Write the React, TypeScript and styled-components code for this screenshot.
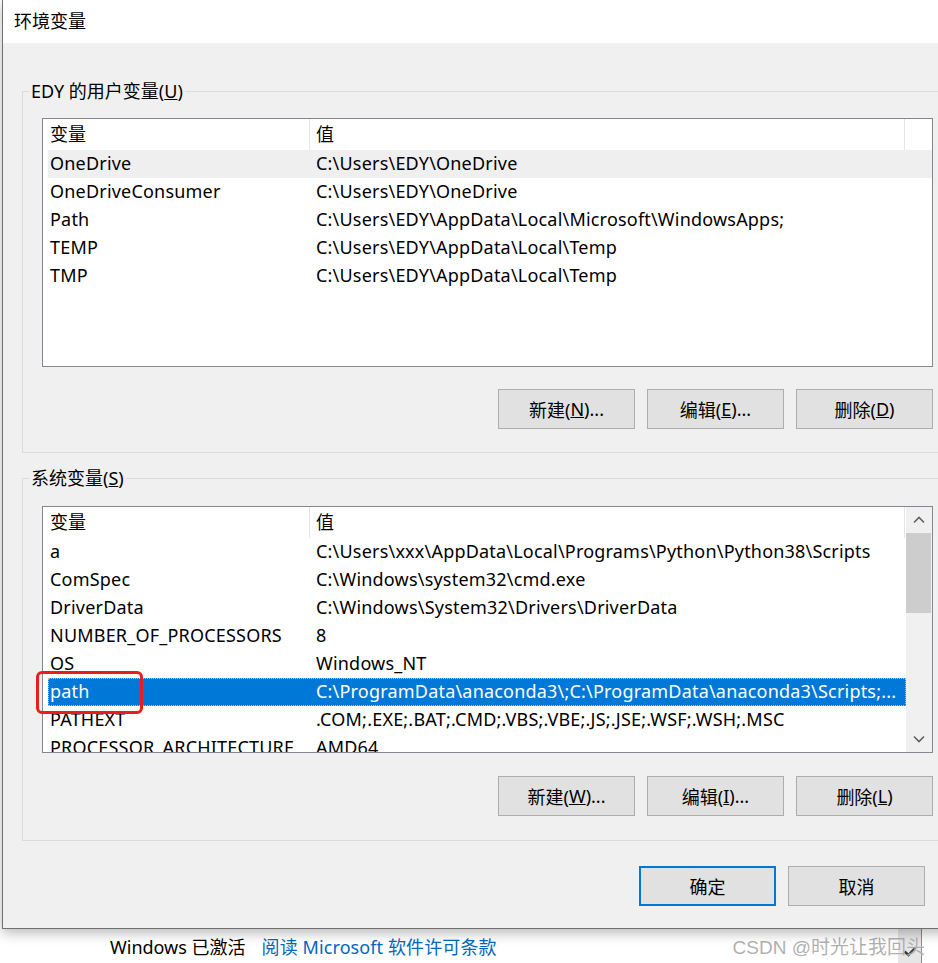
import React from 'react';
import styled, { createGlobalStyle } from 'styled-components';

const FONT = `"Noto Sans", "Noto Sans CJK SC", sans-serif`;

const Global = createGlobalStyle`
  html, body { margin: 0; padding: 0; background: #ffffff; }
  body { font-family: ${FONT}; color: #000; }
  * { box-sizing: border-box; }
`;

const Page = styled.div`
  position: relative;
  width: 938px;
  height: 963px;
  overflow: hidden;
  background: #ffffff;
`;

const Dialog = styled.div`
  margin-left: 2px;
  width: 980px;
  height: 929px;
  border-left: 1px solid #707070;
  border-bottom: 1px solid #707070;
  box-shadow: 0 4px 12px rgba(0, 0, 0, 0.28);
  background: #f0f0f0;
  display: flex;
  flex-direction: column;
  position: relative;
  z-index: 1;
`;

const TitleBar = styled.div`
  height: 43px;
  flex: none;
  background: #ffffff;
  display: flex;
  align-items: center;
  padding: 0 0 3px 11px;
  font-size: 18px;
`;

const Body = styled.div`
  display: flex;
  flex-direction: column;
  padding-left: 19px;
`;

const Group = styled.fieldset<{ $mt: number }>`
  margin: ${(p) => p.$mt}px 0 0 0;
  width: 931px;
  min-inline-size: 0;
  border: 1px solid #dcdcdc;
  padding: 0 19px;
  display: flex;
  flex-direction: column;
`;

const Legend = styled.legend`
  font-size: 18px;
  line-height: 24px;
  padding: 0 2px;
  margin-left: -13px;
`;

const ListBox = styled.div<{ $mt: number; $h: number }>`
  margin-top: ${(p) => p.$mt}px;
  height: ${(p) => p.$h}px;
  border: 1px solid #828790;
  background: #ffffff;
  display: flex;
  overflow: hidden;
`;

const Table = styled.div`
  flex: 1;
  min-width: 0;
  overflow: hidden;
  font-size: 18px;
`;

const HeaderRow = styled.div`
  display: grid;
  grid-template-columns: 267px 595px;
  height: 31px;
`;

const HeaderCell = styled.div<{ $pl: number }>`
  border-right: 1px solid #e5e5e5;
  padding-left: ${(p) => p.$pl}px;
  line-height: 30px;
  white-space: nowrap;
  overflow: hidden;
`;

const Row = styled.div<{ $state?: 'hover' | 'selected' }>`
  display: grid;
  grid-template-columns: 261px 596px;
  height: 28px;
  margin-left: 5px;
  line-height: 27px;
  white-space: nowrap;
  letter-spacing: 0.2px;
  background: ${(p) =>
    p.$state === 'selected' ? '#0078d7' : p.$state === 'hover' ? '#efefef' : 'transparent'};
  color: ${(p) => (p.$state === 'selected' ? '#ffffff' : '#000000')};
  outline: ${(p) => (p.$state === 'selected' ? '1px dotted #f3b26b' : 'none')};
  outline-offset: -1px;
`;

const Cell = styled.div<{ $pl: number }>`
  padding-left: ${(p) => p.$pl}px;
  overflow: hidden;
`;

const Scrollbar = styled.div`
  width: 26px;
  flex: none;
  background: #f0f0f0;
  display: flex;
  flex-direction: column;
`;

const ArrowBtn = styled.div`
  height: 26px;
  flex: none;
  display: flex;
  align-items: center;
  justify-content: center;
`;

const Track = styled.div`
  flex: 1;
`;

const Thumb = styled.div`
  height: 80px;
  margin-right: 1px;
  background: #cdcdcd;
`;

const ButtonRow = styled.div<{ $mt: number; $mb: number }>`
  display: flex;
  justify-content: flex-end;
  gap: 12px;
  margin: ${(p) => p.$mt}px 0 ${(p) => p.$mb}px 0;
`;

const Button = styled.button<{ $primary?: boolean }>`
  width: 137px;
  height: 40px;
  background: #e1e1e1;
  border: ${(p) => (p.$primary ? '2px solid #0078d7' : '1px solid #adadad')};
  font-family: ${FONT};
  font-size: 18px;
  color: #000;
  padding: 0;
  display: flex;
  align-items: center;
  justify-content: center;
`;

const FooterButtons = styled.div`
  display: flex;
  justify-content: flex-end;
  gap: 12px;
  margin-top: 25px;
  width: 903px;
`;

const Desk = styled.div`
  height: 34px;
  display: flex;
  align-items: center;
  padding-left: 110px;
  font-size: 18px;
  position: relative;
`;

const DeskText = styled.span`
  color: #000;
  white-space: nowrap;
`;

const DeskLink = styled.span`
  color: #0067c0;
  margin-left: 16px;
  white-space: nowrap;
  letter-spacing: 0.1px;
`;

const TrayTab = styled.div`
  margin-left: auto;
  margin-right: 16px;
  align-self: stretch;
  width: 24px;
  background: #e6e6e6;
  border-right: 1px solid #8a8a8a;
  display: flex;
  align-items: flex-end;
  justify-content: center;
  padding-bottom: 6px;
`;

const Watermark = styled.div`
  position: absolute;
  right: 13px;
  top: 3px;
  font-family: "Liberation Sans", "Noto Sans CJK SC", sans-serif;
  font-size: 19px;
  color: rgba(150, 150, 150, 0.75);
  text-shadow: 0 0 1px rgba(255, 255, 255, 0.8);
  white-space: nowrap;
`;

const Annotation = styled.div`
  position: absolute;
  left: 36px;
  top: 671px;
  width: 107px;
  height: 43px;
  border: 3px solid #ec1c1c;
  border-radius: 6px;
  z-index: 2;
`;

type Item = { name: string; value: string; state?: 'hover' | 'selected' };

const userVars: Item[] = [
  { name: 'OneDrive', value: 'C:\\Users\\EDY\\OneDrive', state: 'hover' },
  { name: 'OneDriveConsumer', value: 'C:\\Users\\EDY\\OneDrive' },
  { name: 'Path', value: 'C:\\Users\\EDY\\AppData\\Local\\Microsoft\\WindowsApps;' },
  { name: 'TEMP', value: 'C:\\Users\\EDY\\AppData\\Local\\Temp' },
  { name: 'TMP', value: 'C:\\Users\\EDY\\AppData\\Local\\Temp' },
];

const sysVars: Item[] = [
  { name: 'a', value: 'C:\\Users\\xxx\\AppData\\Local\\Programs\\Python\\Python38\\Scripts' },
  { name: 'ComSpec', value: 'C:\\Windows\\system32\\cmd.exe' },
  { name: 'DriverData', value: 'C:\\Windows\\System32\\Drivers\\DriverData' },
  { name: 'NUMBER_OF_PROCESSORS', value: '8' },
  { name: 'OS', value: 'Windows_NT' },
  {
    name: 'path',
    value: 'C:\\ProgramData\\anaconda3\\;C:\\ProgramData\\anaconda3\\Scripts;...',
    state: 'selected',
  },
  { name: 'PATHEXT', value: '.COM;.EXE;.BAT;.CMD;.VBS;.VBE;.JS;.JSE;.WSF;.WSH;.MSC' },
  { name: 'PROCESSOR_ARCHITECTURE', value: 'AMD64' },
];

const Chevron = ({ up }: { up?: boolean }) => (
  <svg width="12" height="8" viewBox="0 0 12 8">
    <path
      d={up ? 'M1 6.5 L6 1.5 L11 6.5' : 'M1 1.5 L6 6.5 L11 1.5'}
      fill="none"
      stroke="#606060"
      strokeWidth="1.6"
    />
  </svg>
);

const CheckMark = () => (
  <svg width="14" height="11" viewBox="0 0 14 11">
    <path d="M1.5 5.5 L5.5 9 L12.5 1.5" fill="none" stroke="#333" strokeWidth="2.4" />
  </svg>
);

const VarTable = ({ items }: { items: Item[] }) => (
  <Table>
    <HeaderRow>
      <HeaderCell $pl={7}>变量</HeaderCell>
      <HeaderCell $pl={6}>值</HeaderCell>
    </HeaderRow>
    {items.map((it) => (
      <Row key={it.name} $state={it.state}>
        <Cell $pl={2}>{it.name}</Cell>
        <Cell $pl={7}>{it.value}</Cell>
      </Row>
    ))}
  </Table>
);

export default function App() {
  return (
    <Page>
      <Global />
      <Dialog>
        <TitleBar>环境变量</TitleBar>
        <Body>
          <Group $mt={36}>
            <Legend>
              EDY 的用户变量(<u>U</u>)
            </Legend>
            <ListBox $mt={15} $h={249}>
              <VarTable items={userVars} />
            </ListBox>
            <ButtonRow $mt={22} $mb={23}>
              <Button>
                新建(<u>N</u>)...
              </Button>
              <Button>
                编辑(<u>E</u>)...
              </Button>
              <Button>
                删除(<u>D</u>)
              </Button>
            </ButtonRow>
          </Group>
          <Group $mt={13}>
            <Legend>
              系统变量(<u>S</u>)
            </Legend>
            <ListBox $mt={16} $h={247}>
              <VarTable items={sysVars} />
              <Scrollbar>
                <ArrowBtn>
                  <Chevron up />
                </ArrowBtn>
                <Track>
                  <Thumb />
                </Track>
                <ArrowBtn>
                  <Chevron />
                </ArrowBtn>
              </Scrollbar>
            </ListBox>
            <ButtonRow $mt={23} $mb={24}>
              <Button>
                新建(<u>W</u>)...
              </Button>
              <Button>
                编辑(<u>I</u>)...
              </Button>
              <Button>
                删除(<u>L</u>)
              </Button>
            </ButtonRow>
          </Group>
          <FooterButtons>
            <Button $primary>确定</Button>
            <Button>取消</Button>
          </FooterButtons>
        </Body>
      </Dialog>
      <Desk>
        <DeskText>Windows 已激活</DeskText>
        <DeskLink>阅读 Microsoft 软件许可条款</DeskLink>
        <TrayTab>
          <CheckMark />
        </TrayTab>
        <Watermark>CSDN @时光让我回头</Watermark>
      </Desk>
      <Annotation />
    </Page>
  );
}
